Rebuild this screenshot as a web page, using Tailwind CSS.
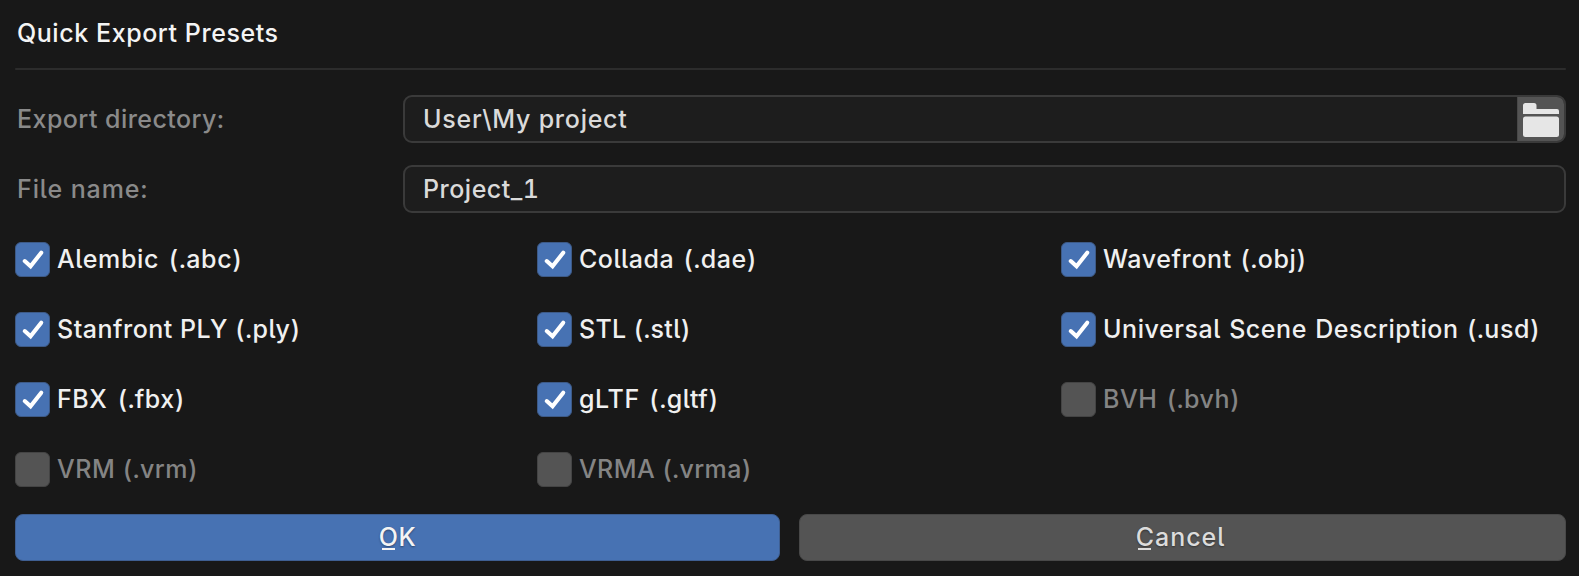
<!DOCTYPE html>
<html lang="en">
<head>
  <meta charset="UTF-8">
  <title>Quick Export Presets</title>
  <script src="https://cdn.jsdelivr.net/npm/@tailwindcss/browser@4"></script>
</head>
<body class="bg-[#181818] w-[1579px] h-[576px] overflow-hidden font-['Inter',sans-serif] font-medium text-[25px] leading-[34px] tracking-[0.5px] [font-feature-settings:'ss02','tnum','calt'_0] text-[#f0f0f0]">
  <svg class="hidden">
    <symbol id="check" viewBox="0 0 34 34">
      <path d="M9 18.600l6 5.400L26 10" fill="none" stroke="#fff" stroke-width="4.200" stroke-linecap="round"/>
    </symbol>
  </svg>

  <main class="flex flex-col pl-[15px] pr-[13px] pt-4">
    <h1 class="h-[52px] pl-0.5 text-[#f4f4f4] tracking-[0.56px]">Quick Export Presets</h1>
    <div class="h-0.5 bg-[#2c2c2c] rounded-full"></div>

    <div class="flex items-center mt-[25px] h-12">
      <label class="w-[388px] pl-0.5 text-[#8a8a8a] tracking-[0.45px]">Export directory:</label>
      <div class="flex-1 h-12 flex justify-between rounded-[9px] border-2 border-[#3a3a3a] bg-[#1d1d1d] overflow-hidden">
        <span class="pl-[18px] pt-[5px] text-[#dadada] tracking-[0.75px]">User\My project</span>
        <button class="w-[49px] -my-0.5 -mr-0.5 pr-px pt-px rounded-r-[9px] border border-[#484848] bg-[#545454] flex items-center justify-center">
          <svg class="w-9 h-[34px]" viewBox="0 0 36 34" fill="#e6e6e6">
            <path d="M0 11V2.500A2.500 2.500 0 0 1 2.500 0H11a2.500 2.500 0 0 1 2.500 2.500V6H34a2 2 0 0 1 2 2V11Z"/>
            <rect y="13.500" width="36" height="20.500" rx="2.500"/>
          </svg>
        </button>
      </div>
    </div>

    <div class="flex items-center mt-[22px] h-12">
      <label class="w-[388px] pl-0.5 text-[#8a8a8a] tracking-[0.9px]">File name:</label>
      <div class="flex-1 h-12 rounded-[9px] border-2 border-[#3a3a3a] bg-[#1d1d1d]">
        <div class="pl-[18px] pt-[5px] text-[#dadada]">Project_1</div>
      </div>
    </div>

    <div class="grid grid-cols-[522px_524px_1fr] auto-rows-[34px] gap-y-9 mt-[29px]">
      <label class="flex gap-[7px] [word-spacing:2px] tracking-[0.65px]"><svg class="size-[35px] rounded-[6px] bg-[#4772b3] border border-[#3d5a87]"><use href="#check"/></svg><span>Alembic (.abc)</span></label>
      <label class="flex gap-[7px] [word-spacing:2px]"><svg class="size-[35px] rounded-[6px] bg-[#4772b3] border border-[#3d5a87]"><use href="#check"/></svg><span>Collada (.dae)</span></label>
      <label class="flex gap-[7px] [word-spacing:1px] tracking-[0.6px]"><svg class="size-[35px] rounded-[6px] bg-[#4772b3] border border-[#3d5a87]"><use href="#check"/></svg><span>Wavefront (.obj)</span></label>

      <label class="flex gap-[7px]"><svg class="size-[35px] rounded-[6px] bg-[#4772b3] border border-[#3d5a87]"><use href="#check"/></svg><span>Stanfront PLY (.ply)</span></label>
      <label class="flex gap-[7px] tracking-[0.3px]"><svg class="size-[35px] rounded-[6px] bg-[#4772b3] border border-[#3d5a87]"><use href="#check"/></svg><span>STL (.stl)</span></label>
      <label class="flex gap-[7px] [word-spacing:1px] tracking-[0.55px]"><svg class="size-[35px] rounded-[6px] bg-[#4772b3] border border-[#3d5a87]"><use href="#check"/></svg><span>Universal Scene Description (.usd)</span></label>

      <label class="flex gap-[7px] [word-spacing:3px]"><svg class="size-[35px] rounded-[6px] bg-[#4772b3] border border-[#3d5a87]"><use href="#check"/></svg><span>FBX (.fbx)</span></label>
      <label class="flex gap-[7px] [word-spacing:2px] tracking-[0.6px]"><svg class="size-[35px] rounded-[6px] bg-[#4772b3] border border-[#3d5a87]"><use href="#check"/></svg><span>gLTF (.gltf)</span></label>
      <label class="flex gap-[7px] [word-spacing:2px] text-[#848484]"><i class="size-[35px] rounded-[6px] bg-[#545454] border border-[#444]"></i><span>BVH (.bvh)</span></label>

      <label class="flex gap-[7px] text-[#848484]"><i class="size-[35px] rounded-[6px] bg-[#545454] border border-[#444]"></i><span>VRM (.vrm)</span></label>
      <label class="flex gap-[7px] tracking-[0.4px] text-[#848484]"><i class="size-[35px] rounded-[6px] bg-[#545454] border border-[#444]"></i><span>VRMA (.vrma)</span></label>
    </div>

    <div class="grid grid-cols-[765px_767px] gap-x-[19px] mt-[28px]">
      <button class="h-[47px] pb-px rounded-lg bg-[#4772b3] border border-[#3f5f92] text-[#f4f4f4] [text-shadow:0_1px_2px_rgb(0_0_0/0.4)]"><span class="inline-block relative">O<i class="absolute left-[3px] bottom-1 w-[13px] h-0.5 bg-[#f4f4f4]"></i></span>K</button>
      <button class="h-[47px] pb-px pr-1 rounded-lg bg-[#545454] border border-[#484848] text-[#dcdcdc] tracking-[0.95px] [text-shadow:0_1px_2px_rgb(0_0_0/0.4)]"><span class="inline-block relative">C<i class="absolute left-0.5 bottom-1 w-[13px] h-0.5 bg-[#dcdcdc]"></i></span>ancel</button>
    </div>
  </main>
</body>
</html>
